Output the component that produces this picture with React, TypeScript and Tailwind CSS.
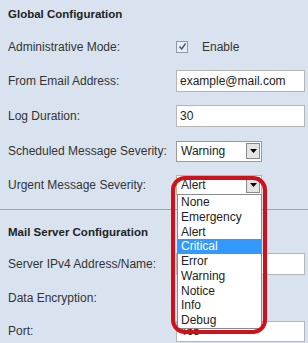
import React from "react";

const items = ["None", "Emergency", "Alert", "Critical", "Error", "Warning", "Notice", "Info", "Debug"];

function Arrow() {
  return (
    <div className="w-[14px] h-[16px] bg-[#e4e4e4] border border-[#8a8a8a] flex items-center justify-center">
      <svg width="7" height="4" viewBox="0 0 7 4">
        <polygon points="0,0 7,0 3.5,4" fill="#000" />
      </svg>
    </div>
  );
}

function Row({ label, h, children }: { label: string; h: string; children?: React.ReactNode }) {
  return (
    <div className={`flex items-center ${h}`}>
      <div className="w-[176px] pl-[8px] shrink-0">{label}</div>
      {children}
    </div>
  );
}

export default function App() {
  return (
    <div className="relative w-[308px] h-[343px] overflow-hidden bg-[#d9e3ef] text-[12px] text-[#333] font-['Liberation_Sans',Arial,sans-serif]">
      <div className="h-[30px] flex items-center pl-[8px] font-bold text-[11.5px] text-[#222]">Global Configuration</div>
      <Row label="Administrative Mode:" h="h-[33px]">
        <div className="w-[12px] h-[12px] border border-[#8f9aa8] bg-[#e9eef4] flex items-center justify-center">
          <svg width="9" height="9" viewBox="0 0 9 9">
            <path d="M1.5 4.5 L3.7 7 L7.5 1.5" stroke="#4a5a70" strokeWidth="1.4" fill="none" />
          </svg>
        </div>
        <span className="ml-[14px] text-[12px]">Enable</span>
      </Row>
      <Row label="From Email Address:" h="h-[35px]">
        <div className="w-[129px] h-[22px] bg-white border border-[#b5b5b5] flex items-center pl-[3px] text-[#222]">example@mail.com</div>
      </Row>
      <Row label="Log Duration:" h="h-[35px]">
        <div className="w-[129px] h-[22px] bg-white border border-[#b5b5b5] flex items-center pl-[3px] text-[#222]">30</div>
      </Row>
      <Row label="Scheduled Message Severity:" h="h-[36px]">
        <div className="w-[86px] h-[21px] bg-white border border-[#9a9a9a] flex items-center justify-between pl-[4px] pr-[1px] text-[#222]">
          <span>Warning</span>
          <Arrow />
        </div>
      </Row>
      <Row label="Urgent Message Severity:" h="h-[31px]">
        <div className="w-[86px] h-[20px] bg-white border border-[#c4b48a] flex items-center justify-between pl-[4px] pr-[1px] text-[#222]">
          <span>Alert</span>
          <Arrow />
        </div>
      </Row>
      <div className="h-[18px] flex items-center">
        <div className="w-full h-px bg-[#9aa4b0]" />
      </div>
      <div className="h-[30px] flex items-center pl-[8px] font-bold text-[11.5px] text-[#222]">Mail Server Configuration</div>
      <Row label="Server IPv4 Address/Name:" h="h-[32px]">
        <div className="w-[129px] h-[22px] bg-white border border-[#b5b5b5]" />
      </Row>
      <Row label="Data Encryption:" h="h-[35px]" />
      <Row label="Port:" h="h-[32px]">
        <div className="w-[129px] h-[21px] bg-white border border-[#b5b5b5] flex items-start pl-[3px] text-[#222] leading-[18px]">465</div>
      </Row>

      <div className="absolute left-[177px] top-[194px] w-[85px] bg-white border border-[#8a8a8a] text-[12px] text-[#222]">
        {items.map((it) => (
          <div
            key={it}
            className={`h-[14.75px] leading-[14.75px] pl-[3px] ${it === "Critical" ? "bg-[#3399ff] text-white" : ""}`}
          >
            {it}
          </div>
        ))}
      </div>
      <div className="absolute left-[171px] top-[176px] w-[96px] h-[158px] border-[4px] border-[#d0101a] rounded-[14px]" />
    </div>
  );
}
